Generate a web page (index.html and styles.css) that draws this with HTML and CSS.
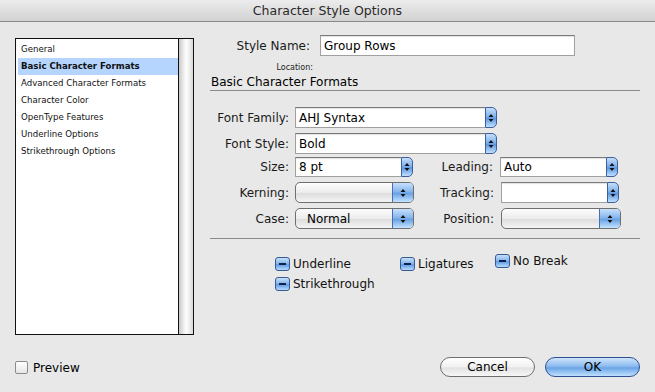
FILE: index.html
```html
<!DOCTYPE html>
<html>
<head>
<meta charset="utf-8">
<link rel="stylesheet" href="styles.css">
</head>
<body>
<div class="window">
  <div class="titlebar">Character Style Options</div>
  <div class="main">
    <div class="sidebar">
      <div class="list">
        <ul class="items">
          <li>General</li>
          <li class="sel">Basic Character Formats</li>
          <li>Advanced Character Formats</li>
          <li>Character Color</li>
          <li>OpenType Features</li>
          <li>Underline Options</li>
          <li>Strikethrough Options</li>
        </ul>
        <div class="scrolltrack"></div>
      </div>
    </div>
    <div class="form">
      <div class="row name-row">
        <span class="label name-label">Style Name:</span>
        <div class="textfield name-field">Group Rows</div>
      </div>
      <div class="location">Location:</div>
      <div class="section-title">Basic Character Formats</div>

      <div class="row r-family">
        <span class="label l1">Font Family:</span>
        <div class="combo w-wide"><div class="textfield">AHJ Syntax</div><div class="stepper"><svg viewBox="0 0 6 10" width="6" height="10"><path d="M3 1 L5.5 4 L0.5 4 Z M3 9 L5.5 6 L0.5 6 Z" fill="#111"/></svg></div></div>
      </div>
      <div class="row r-style">
        <span class="label l1">Font Style:</span>
        <div class="combo w-wide"><div class="textfield">Bold</div><div class="stepper"><svg viewBox="0 0 6 10" width="6" height="10"><path d="M3 1 L5.5 4 L0.5 4 Z M3 9 L5.5 6 L0.5 6 Z" fill="#111"/></svg></div></div>
      </div>
      <div class="row r-size">
        <span class="label l1">Size:</span>
        <div class="combo w-small"><div class="textfield">8 pt</div><div class="stepper"><svg viewBox="0 0 6 10" width="6" height="10"><path d="M3 1 L5.5 4 L0.5 4 Z M3 9 L5.5 6 L0.5 6 Z" fill="#111"/></svg></div></div>
        <span class="label l2">Leading:</span>
        <div class="combo w-small"><div class="textfield">Auto</div><div class="stepper"><svg viewBox="0 0 6 10" width="6" height="10"><path d="M3 1 L5.5 4 L0.5 4 Z M3 9 L5.5 6 L0.5 6 Z" fill="#111"/></svg></div></div>
      </div>
      <div class="row r-kern">
        <span class="label l1">Kerning:</span>
        <div class="popup p-left"><span class="ptext"></span><span class="parrow"><svg viewBox="0 0 6 10" width="6" height="10"><path d="M3 1 L5.5 4 L0.5 4 Z M3 9 L5.5 6 L0.5 6 Z" fill="#111"/></svg></span></div>
        <span class="label l2b">Tracking:</span>
        <div class="combo w-small"><div class="textfield"></div><div class="stepper"><svg viewBox="0 0 6 10" width="6" height="10"><path d="M3 1 L5.5 4 L0.5 4 Z M3 9 L5.5 6 L0.5 6 Z" fill="#111"/></svg></div></div>
      </div>
      <div class="row r-case">
        <span class="label l1">Case:</span>
        <div class="popup p-left"><span class="ptext">Normal</span><span class="parrow"><svg viewBox="0 0 6 10" width="6" height="10"><path d="M3 1 L5.5 4 L0.5 4 Z M3 9 L5.5 6 L0.5 6 Z" fill="#111"/></svg></span></div>
        <span class="label l2b">Position:</span>
        <div class="popup p-right"><span class="ptext"></span><span class="parrow"><svg viewBox="0 0 6 10" width="6" height="10"><path d="M3 1 L5.5 4 L0.5 4 Z M3 9 L5.5 6 L0.5 6 Z" fill="#111"/></svg></span></div>
      </div>
      <div class="divider"></div>
      <div class="checks">
        <label class="check c1"><span class="mixed"></span>Underline</label>
        <label class="check c2"><span class="mixed"></span>Ligatures</label>
        <label class="check c3"><span class="mixed"></span>No Break</label>
        <label class="check c1"><span class="mixed"></span>Strikethrough</label>
      </div>
    </div>
  </div>
  <div class="footer">
    <label class="preview"><span class="box"></span>Preview</label>
    <div class="buttons">
      <div class="btn cancel">Cancel</div>
      <div class="btn ok">OK</div>
    </div>
  </div>
</div>
</body>
</html>
```
FILE: styles.css
```css
html, body {
  margin: 0;
  padding: 0;
}
body {
  background: #e8e8e8;
  font-family: "DejaVu Sans", "Liberation Sans", sans-serif;
  font-size: 12px;
  color: #000;
}
.window {
  width: 655px;
  height: 392px;
  overflow: hidden;
}
.titlebar {
  height: 21px;
  line-height: 21px;
  text-align: center;
  font-size: 12.5px;
  color: #2a2a2a;
  background: linear-gradient(#ececec, #d2d2d2);
  border-bottom: 1px solid #8a8a8a;
}
.main {
  display: flex;
  height: 313px;
}
.sidebar {
  margin-left: 15px;
  width: 179px;
  padding-top: 16px;
}
.list {
  box-sizing: border-box;
  height: 297px;
  border: 1px solid #111;
  background: #fff;
  display: flex;
}
.items {
  list-style: none;
  margin: 0;
  padding: 2px 0 0 2px;
  flex: 1;
  font-size: 8.6px;
}
.items li {
  height: 17px;
  line-height: 17px;
  padding-left: 3px;
  color: #111;
  white-space: nowrap;
}
.items li.sel {
  background: #b5d5ff;
  font-weight: bold;
}
.scrolltrack {
  width: 14px;
  border-left: 1px solid #111;
  background: linear-gradient(90deg, #c9c9c9, #f4f4f4 40%, #fdfdfd 55%, #d8d8d8);
}
.form {
  margin-left: 16px;
  width: 430px;
}
.row {
  display: flex;
  align-items: center;
}
.label {
  text-align: right;
  white-space: nowrap;
  color: #1a1a1a;
}
.name-row {
  margin-top: 13px;
  height: 21px;
}
.name-label {
  width: 100px;
  margin-right: 10px;
}
.textfield {
  box-sizing: border-box;
  background: #fff;
  border: 1px solid #a0a0a0;
  border-top-color: #7a7a7a;
  box-shadow: inset 0 1px 1px rgba(0,0,0,0.12);
  height: 100%;
  padding: 0 3px;
  display: flex;
  align-items: center;
  font-size: 12px;
  white-space: nowrap;
}
.name-field {
  width: 255px;
}
.location {
  width: 103px;
  text-align: right;
  font-size: 8px;
  margin-top: 6px;
  height: 12px;
  line-height: 12px;
  color: #222;
}
.section-title {
  height: 16px;
  line-height: 16px;
  border-bottom: 1px solid #8a8a8a;
  padding-left: 1px;
  font-size: 12px;
}
.l1 {
  width: 79px;
  margin-right: 6px;
}
.l2, .l2b {
  width: 80px;
  margin-right: 7px;
}
.combo {
  display: flex;
  height: 100%;
}
.combo .textfield {
  flex: 1;
  border-right: none;
}
.w-wide { width: 202px; }
.w-small { width: 118px; }
.stepper {
  box-sizing: border-box;
  width: 12px;
  height: 100%;
  border: 1px solid #3d5f9e;
  border-radius: 0 5px 5px 0;
  background: linear-gradient(#c5defa, #7fb1ea 45%, #5d98e0 55%, #bfe0ff);
  display: flex;
  align-items: center;
  justify-content: center;
}
.r-family {
  margin-top: 16px;
  height: 21px;
}
.r-style {
  margin-top: 5px;
  height: 21px;
}
.r-size {
  margin-top: 3px;
  height: 20px;
}
.r-kern {
  margin-top: 5px;
  height: 21px;
}
.r-case {
  margin-top: 5px;
  height: 21px;
}
.popup {
  box-sizing: border-box;
  height: 100%;
  border: 1px solid #6f6f6f;
  border-radius: 5px;
  background: linear-gradient(#fdfdfd, #ececec 50%, #dedede 55%, #f4f4f4);
  display: flex;
  overflow: hidden;
}
.p-left { width: 119px; }
.p-right { width: 120px; }
.ptext {
  flex: 1;
  padding-left: 11px;
  display: flex;
  align-items: center;
  font-size: 12px;
}
.parrow {
  width: 20px;
  border-left: 1px solid #4a6fb0;
  background: linear-gradient(#c8e0fb, #86b6ec 45%, #6aa2e4 55%, #c4e4ff);
  display: flex;
  align-items: center;
  justify-content: center;
}
.divider {
  margin-top: 9px;
  height: 1px;
  background: #8a8a8a;
}
.checks {
  display: grid;
  grid-template-columns: 125px 95px auto;
  row-gap: 5px;
  padding-left: 65px;
  margin-top: 17px;
}
.check {
  display: flex;
  align-items: center;
  height: 15px;
  font-size: 12px;
  color: #111;
  white-space: nowrap;
}
.c3 { margin-top: -3px; }
.mixed {
  box-sizing: border-box;
  width: 15px;
  height: 14px;
  border: 1px solid #375a95;
  border-radius: 3px;
  background: linear-gradient(#c7e0fa, #7eb1ea 50%, #5f9be2 55%, #b8dbff);
  margin-right: 3px;
  position: relative;
}
.mixed::after {
  content: "";
  position: absolute;
  left: 3px;
  top: 5px;
  width: 7px;
  height: 2px;
  background: #10214a;
}
.footer {
  display: flex;
  justify-content: space-between;
  align-items: center;
  padding: 0 15px;
  margin-top: 21px;
  height: 21px;
}
.preview {
  display: flex;
  align-items: center;
  font-size: 12px;
  margin-top: 2px;
}
.box {
  box-sizing: border-box;
  width: 13px;
  height: 13px;
  border: 1px solid #8c8c8c;
  border-radius: 2px;
  background: linear-gradient(#ffffff, #e6e6e6);
  margin-right: 5px;
}
.buttons {
  display: flex;
  gap: 10px;
}
.btn {
  box-sizing: border-box;
  width: 95px;
  height: 20px;
  border-radius: 10px;
  display: flex;
  align-items: center;
  justify-content: center;
  font-size: 12px;
}
.cancel {
  border: 1px solid #6e6e6e;
  background: linear-gradient(#ffffff, #f0f0f0 50%, #e2e2e2 55%, #f6f6f6);
}
.ok {
  border: 1px solid #2e4f93;
  background: linear-gradient(#cfe4fb, #8dbcef 45%, #6aa4e6 55%, #bfe1ff);
}
```
